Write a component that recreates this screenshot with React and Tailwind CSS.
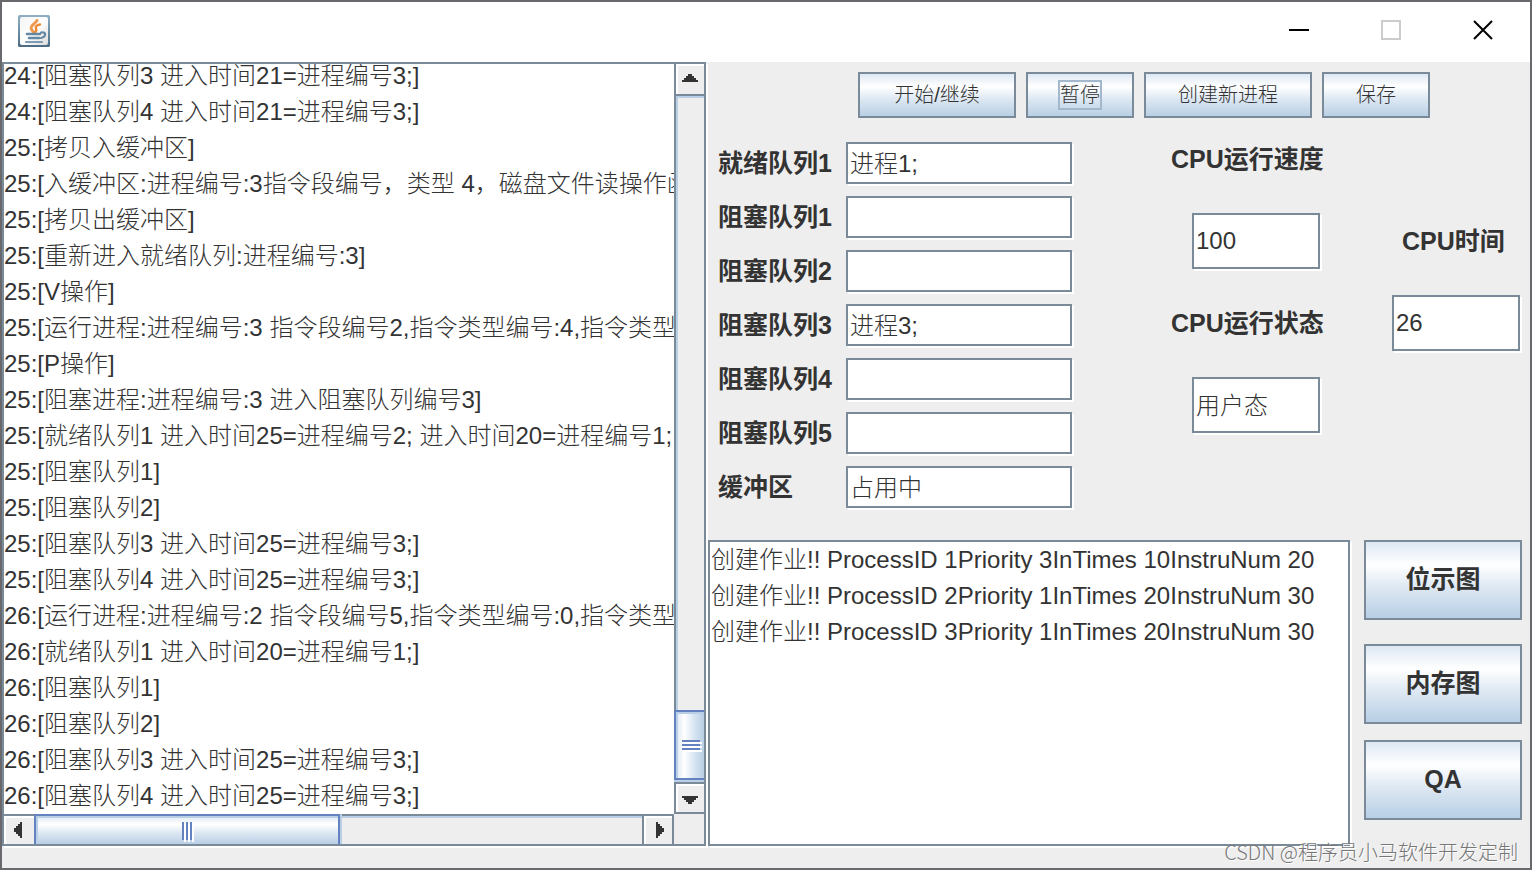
const LOG_LINES = [
  '24:[阻塞队列3 进入时间21=进程编号3;]',
  '24:[阻塞队列4 进入时间21=进程编号3;]',
  '25:[拷贝入缓冲区]',
  '25:[入缓冲区:进程编号:3指令段编号，类型 4，磁盘文件读操作函',
  '25:[拷贝出缓冲区]',
  '25:[重新进入就绪队列:进程编号:3]',
  '25:[V操作]',
  '25:[运行进程:进程编号:3 指令段编号2,指令类型编号:4,指令类型',
  '25:[P操作]',
  '25:[阻塞进程:进程编号:3 进入阻塞队列编号3]',
  '25:[就绪队列1 进入时间25=进程编号2; 进入时间20=进程编号1;',
  '25:[阻塞队列1]',
  '25:[阻塞队列2]',
  '25:[阻塞队列3 进入时间25=进程编号3;]',
  '25:[阻塞队列4 进入时间25=进程编号3;]',
  '26:[运行进程:进程编号:2 指令段编号5,指令类型编号:0,指令类型',
  '26:[就绪队列1 进入时间20=进程编号1;]',
  '26:[阻塞队列1]',
  '26:[阻塞队列2]',
  '26:[阻塞队列3 进入时间25=进程编号3;]',
  '26:[阻塞队列4 进入时间25=进程编号3;]',
];

const JOB_LINES = [
  '创建作业!! ProcessID 1Priority 3InTimes 10InstruNum 20',
  '创建作业!! ProcessID 2Priority 1InTimes 20InstruNum 30',
  '创建作业!! ProcessID 3Priority 1InTimes 20InstruNum 30',
];

const QUEUES = [
  { id: 'ready1', label: '就绪队列1', value: '进程1;' },
  { id: 'block1', label: '阻塞队列1', value: '' },
  { id: 'block2', label: '阻塞队列2', value: '' },
  { id: 'block3', label: '阻塞队列3', value: '进程3;' },
  { id: 'block4', label: '阻塞队列4', value: '' },
  { id: 'block5', label: '阻塞队列5', value: '' },
  { id: 'buffer', label: '缓冲区', value: '占用中' },
];

const BUTTON =
  'shrink-0 border-2 border-[#7a8a99] bg-[linear-gradient(to_bottom,#dde8f3_0%,#ffffff_30%,#dde8f3_60%,#b8cfe5_100%)]';
const FIELD =
  'min-w-0 border-2 border-[#7a8a99] bg-white px-0.5 text-2xl font-light text-[#333] shadow-[2px_2px_0_#fff] outline-none';
const LABEL = 'text-[25px] leading-9 font-bold whitespace-nowrap';

function JavaIcon() {
  return (
    <svg className="mt-[13px] ml-4 size-8" viewBox="0 0 32 32" aria-hidden="true">
      <defs>
        <linearGradient id="frame" x1="0" y1="0" x2="0" y2="1">
          <stop offset="0" stopColor="#8fb0c4" />
          <stop offset="1" stopColor="#4b6c84" />
        </linearGradient>
        <linearGradient id="face" x1="0" y1="0" x2="1" y2="1">
          <stop offset="0" stopColor="#f4f4f4" />
          <stop offset="0.5" stopColor="#ffffff" />
          <stop offset="1" stopColor="#dcdcdc" />
        </linearGradient>
      </defs>
      <rect width="32" height="32" rx="1.5" fill="url(#frame)" />
      <rect x="2" y="2" width="28" height="28" rx="2" fill="url(#face)" />
      <g fill="none" strokeLinecap="round">
        <path d="M19 5.500c-1 3-6 4-6 7.500 0 2 2 3 3 4.500" stroke="#ee9a50" strokeWidth="3" />
        <path d="M22 9.500c-3 .5-5 2-4 4s0 3-1 4" stroke="#ee8a34" strokeWidth="2.4" />
        <path d="M9 19h13M11 23h10" stroke="#6488a4" strokeWidth="2.6" />
        <path d="M23 17.500c6-1 5 4.500 0 5.500" stroke="#6488a4" strokeWidth="2.2" />
        <path d="M8 27h16" stroke="#7d9cb4" strokeWidth="2.2" />
      </g>
    </svg>
  );
}

function TitleBar() {
  return (
    <header className="flex h-[60px] shrink-0 items-start bg-white pr-px">
      <JavaIcon />
      <div className="ml-auto flex h-14">
        <button aria-label="最小化" className="flex w-[92px] items-center justify-center">
          <svg width="20" height="20" viewBox="0 0 20 20">
            <path d="M0 10h20" stroke="#000" strokeWidth="2" />
          </svg>
        </button>
        <button aria-label="最大化" disabled className="flex w-[92px] items-center justify-center">
          <svg width="20" height="20" viewBox="0 0 20 20">
            <rect x="1" y="1" width="18" height="18" fill="none" stroke="#ccc" strokeWidth="2" />
          </svg>
        </button>
        <button aria-label="关闭" className="flex w-[92px] items-center justify-center">
          <svg width="20" height="20" viewBox="0 0 20 20">
            <path d="M1 1l18 18M19 1L1 19" stroke="#000" strokeWidth="2" />
          </svg>
        </button>
      </div>
    </header>
  );
}

function VerticalScrollBar() {
  return (
    <div className="flex w-[30px] shrink-0 flex-col">
      <button
        aria-label="向上滚动"
        className="flex h-8 items-center justify-center border-b-2 border-l-2 border-[#7a8a99] pb-0.5 shadow-[inset_2px_2px_0_#fff]"
      >
        <svg width="16" height="8" viewBox="0 0 16 8" shapeRendering="crispEdges">
          <path d="M6 0h4v2h2v2h2v2h2v2H0V6h2V4h2V2h2z" fill="#333" />
        </svg>
      </button>
      <div className="flex min-h-0 flex-1 flex-col justify-end border-l-2 border-[#7a8a99] pb-0.5 shadow-[inset_2px_2px_0_#b8cfe5]">
        <div className="-ml-0.5 flex h-[70px] items-center justify-center border-y-2 border-l-2 border-[#6382bf] bg-[linear-gradient(to_right,#dde8f3_0%,#ffffff_30%,#dde8f3_60%,#b8cfe5_100%)] pt-0.5 pl-1 shadow-[inset_2px_2px_0_#b8cfe5,0_2px_0_#b8cfe5]">
          <svg width="20" height="12" viewBox="0 0 20 12" shapeRendering="crispEdges">
            <path d="M2 3h18M2 7h18M2 11h18" stroke="#fff" strokeWidth="2" />
            <path d="M0 1h18M0 5h18M0 9h18" stroke="#6382bf" strokeWidth="2" />
          </svg>
        </div>
      </div>
      <button
        aria-label="向下滚动"
        className="flex h-8 items-center justify-center border-y-2 border-l-2 border-[#7a8a99] pt-1 shadow-[inset_2px_2px_0_#fff]"
      >
        <svg width="16" height="8" viewBox="0 0 16 8" shapeRendering="crispEdges">
          <path d="M0 0h16v2h-2v2h-2v2h-2v2H6V6H4V4H2V2H0z" fill="#333" />
        </svg>
      </button>
    </div>
  );
}

function HorizontalScrollBar() {
  return (
    <div className="flex h-[30px] shrink-0 pr-[30px]">
      <button
        aria-label="向左滚动"
        className="flex w-[30px] shrink-0 items-center justify-center border-t-2 border-[#7a8a99] pr-0.5 shadow-[inset_2px_2px_0_#fff]"
      >
        <svg width="8" height="16" viewBox="0 0 8 16" shapeRendering="crispEdges">
          <path d="M8 0v16H6v-2H4v-2H2v-2H0V6h2V4h2V2h2V0z" fill="#333" />
        </svg>
      </button>
      <div className="min-w-0 flex-1 border-t-2 border-[#7a8a99] shadow-[inset_0_2px_0_#b8cfe5]">
        <div className="-mt-0.5 flex h-[30px] w-[306px] items-center justify-center border-x-2 border-t-2 border-[#6382bf] bg-[linear-gradient(to_bottom,#dde8f3_0%,#ffffff_30%,#dde8f3_60%,#b8cfe5_100%)] pt-1 pl-0.5 shadow-[inset_2px_2px_0_#b8cfe5,2px_0_0_#b8cfe5]">
          <svg width="12" height="20" viewBox="0 0 12 20" shapeRendering="crispEdges">
            <path d="M3 2v18M7 2v18M11 2v18" stroke="#fff" strokeWidth="2" />
            <path d="M1 0v18M5 0v18M9 0v18" stroke="#6382bf" strokeWidth="2" />
          </svg>
        </div>
      </div>
      <button
        aria-label="向右滚动"
        className="flex w-8 shrink-0 items-center justify-center border-x-2 border-t-2 border-[#7a8a99] pl-1 shadow-[inset_2px_2px_0_#fff]"
      >
        <svg width="8" height="16" viewBox="0 0 8 16" shapeRendering="crispEdges">
          <path d="M0 0v16h2v-2h2v-2h2v-2h2V6H6V4H4V2H2V0z" fill="#333" />
        </svg>
      </button>
    </div>
  );
}

function LogPane() {
  return (
    <section className="mr-0.5 flex min-h-0 min-w-0 flex-col border-2 border-[#7a8a99] shadow-[2px_2px_0_#fff]">
      <div className="flex min-h-0 flex-1">
        {/* Stays pinned to the newest line */}
        <ul className="flex min-w-0 flex-1 flex-col justify-end overflow-hidden bg-white text-2xl leading-9 font-light whitespace-pre">
          {LOG_LINES.map((line, i) => (
            <li key={i} className="h-9 shrink-0">
              {line}
            </li>
          ))}
        </ul>
        <VerticalScrollBar />
      </div>
      <HorizontalScrollBar />
    </section>
  );
}

function Toolbar() {
  return (
    <div className="flex justify-center gap-2.5 pt-2.5 pl-[50px] text-xl font-light">
      <button className={`${BUTTON} h-[46px] w-[158px]`}>开始/继续</button>
      <button className={`${BUTTON} flex h-[46px] w-[108px] items-center justify-center`}>
        <span className="border-2 border-[#a3b8cc] leading-[26px]">暂停</span>
      </button>
      <button className={`${BUTTON} h-[46px] w-[168px]`}>创建新进程</button>
      <button className={`${BUTTON} h-[46px] w-[108px]`}>保存</button>
    </div>
  );
}

function StatusPanel() {
  return (
    <div className="flex h-[422px] shrink-0 justify-between pr-2.5 pl-2.5">
      <div className="flex flex-col gap-3 pt-6">
        {QUEUES.map((q) => (
          <div key={q.id} className="flex items-center">
            <label htmlFor={q.id} className={`${LABEL} w-32`}>
              {q.label}
            </label>
            <input id={q.id} readOnly value={q.value} className={`${FIELD} h-[42px] w-[226px] pb-1`} />
          </div>
        ))}
      </div>

      <div className="flex gap-[72px]">
        {/* CPU speed and mode */}
        <div className="grid h-[328px] w-[149px] grid-cols-[149px] grid-rows-4 items-center">
          <label htmlFor="speed" className={LABEL}>CPU运行速度</label>
          <input id="speed" defaultValue="100" className={`${FIELD} h-14 w-32 justify-self-end`} />
          <label htmlFor="mode" className={LABEL}>CPU运行状态</label>
          <input id="mode" readOnly value="用户态" className={`${FIELD} h-14 w-32 justify-self-end pb-1`} />
        </div>

        {/* CPU clock */}
        <div className="mt-[82px] grid h-[164px] w-32 grid-rows-2 items-center">
          <label htmlFor="clock" className={`${LABEL} pl-2.5`}>CPU时间</label>
          <input id="clock" readOnly value="26" className={`${FIELD} h-14 w-32`} />
        </div>
      </div>
    </div>
  );
}

function JobPanel() {
  return (
    <div className="flex min-h-0 flex-1 gap-3.5 pr-2">
      <textarea
        readOnly
        aria-label="作业"
        value={JOB_LINES.join('\n')}
        className="min-w-0 flex-1 resize-none overflow-hidden border-2 border-[#7a8a99] bg-white pl-px text-2xl leading-9 font-light whitespace-pre shadow-[2px_2px_0_#fff] outline-none"
      />
      <div className="flex w-[158px] flex-col text-[25px] font-bold">
        <button className={`${BUTTON} h-20`}>位示图</button>
        <button className={`${BUTTON} mt-6 h-20`}>内存图</button>
        <button className={`${BUTTON} mt-4 h-20`}>QA</button>
      </div>
    </div>
  );
}

export default function App() {
  return (
    <div className="relative flex h-screen flex-col border-2 border-[#69686c] bg-[#eee] font-['Liberation_Sans','Noto_Sans_CJK_SC',sans-serif] text-[#333]">
      <TitleBar />
      <main className="grid min-h-0 flex-1 grid-cols-[706fr_822fr] grid-rows-[minmax(0,1fr)] pb-[22px]">
        <LogPane />
        <section className="flex min-h-0 min-w-0 flex-col">
          <Toolbar />
          <StatusPanel />
          <JobPanel />
        </section>
      </main>
      <p className="absolute right-3 bottom-0 font-['Noto_Sans_CJK_SC',sans-serif] text-xl leading-8 font-light text-[#777] [text-shadow:1px_1px_0_#fff]">
        CSDN @程序员小马软件开发定制
      </p>
    </div>
  );
}
